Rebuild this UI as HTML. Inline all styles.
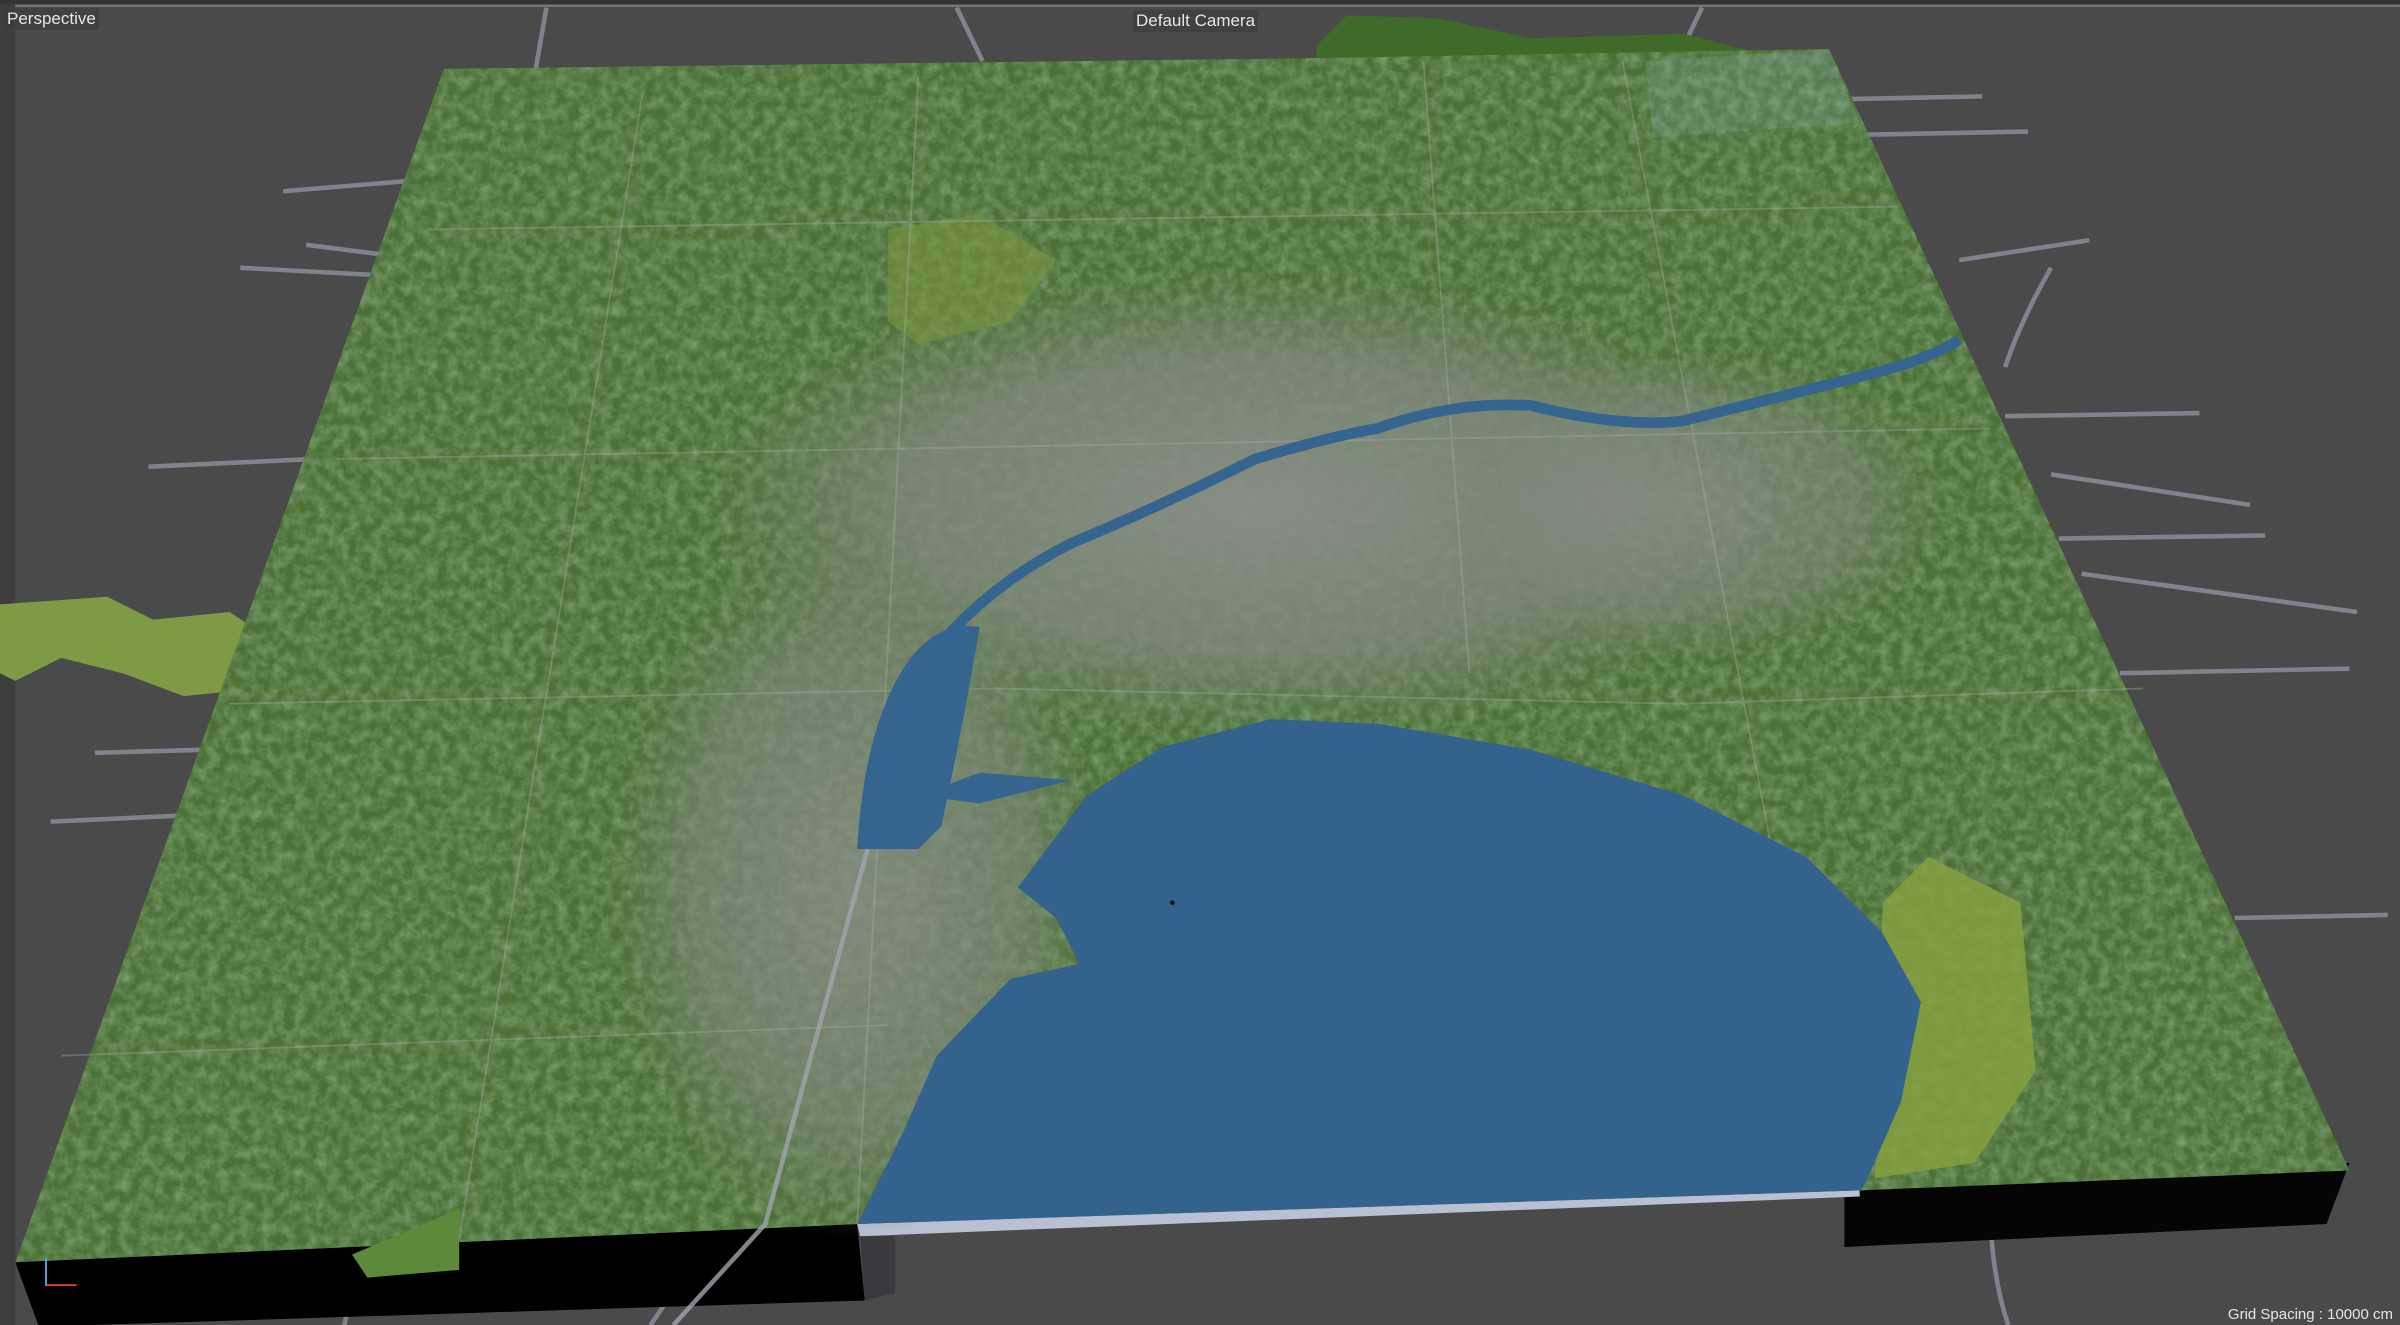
<!DOCTYPE html>
<html><head><meta charset="utf-8"><style>
html,body{margin:0;padding:0;background:#4a4a4a;width:2400px;height:1325px;overflow:hidden}
svg{position:absolute;left:0;top:0}
.lbl{position:absolute;font-family:"Liberation Sans",sans-serif;color:#e6e6e6;font-size:17px;background:rgba(60,60,60,.6);padding:1px 3px;white-space:nowrap}
</style></head><body>
<svg width="2400" height="1325" viewBox="0 0 1568 866" preserveAspectRatio="none">
<defs>
<filter id="n" x="0" y="0" width="100%" height="100%">
<feTurbulence type="fractalNoise" baseFrequency="0.14" numOctaves="3" seed="3"/>
<feColorMatrix values="0 0 0 0 0.22  0 0 0 0 0.38  0 0 0 0 0.18  0 0 0 1.4 -0.45"/>
<feComposite in2="SourceGraphic" operator="in"/>
</filter>
<radialGradient id="urb" cx="0.5" cy="0.5" r="0.5">
<stop offset="0" stop-color="#8a8f88" stop-opacity="0.95"/>
<stop offset="0.65" stop-color="#7f877b" stop-opacity="0.8"/>
<stop offset="1" stop-color="#76826e" stop-opacity="0"/>
</radialGradient>
</defs>
<rect width="1568" height="866" fill="#4a4a4a"/>
<rect x="0" y="0" width="1568" height="3" fill="#333"/>
<rect x="0" y="3" width="1568" height="1.5" fill="#777"/>
<rect x="0" y="3" width="10" height="863" fill="#3e3e3e"/>
<g stroke="#8a8d98" stroke-width="3" fill="none" opacity="0.85">
<path d="M185 125 L270 118 L275 100"/><path d="M157 175 L250 180"/><path d="M200 160 L255 167"/>
<path d="M97 305 L205 300"/><path d="M62 492 L135 490"/><path d="M33 537 L120 533"/>
<path d="M1195 65 L1295 63"/><path d="M1220 88 L1325 86"/><path d="M1280 170 L1365 157"/>
<path d="M1310 272 L1437 270"/><path d="M1340 310 L1470 330"/><path d="M1345 352 L1480 350"/>
<path d="M1360 375 L1540 400"/><path d="M1385 440 L1535 437"/><path d="M1460 600 L1560 598"/>
<path d="M350 45 L357 5"/><path d="M625 5 L642 40"/><path d="M1100 30 L1112 5"/>
<path d="M1300 780 Q1300 830 1312 866"/><path d="M235 820 L225 866"/><path d="M470 800 L425 866"/>
<path d="M1340 175 Q1320 210 1310 240"/>
</g>
<path d="M0 395 L70 390 L100 405 L150 400 L180 420 L170 450 L120 455 L80 440 L40 430 L10 445 L0 440Z" fill="#7f9a45"/>
<path d="M860 30 L880 10 L940 12 L1000 25 L1100 22 L1150 35 L860 40Z" fill="#3f6a2a"/>
<path d="M10 825 L560 800 L565 850 L60 866 L25 866Z" fill="#000"/>
<path d="M1205 775 L1535 760 L1520 800 L1205 815Z" fill="#050505"/>
<path d="M560 800 L1215 775 L1215 782 L562 808Z" fill="#b8c0d2"/>
<path d="M562 808 L585 808 L585 845 L565 850Z" fill="#3a3a3e"/>
<path d="M290 45 L860 38 L1195 32 L1535 765 L1215 778 L560 800 L10 825Z" fill="#4c7138"/>
<path d="M290 45 L860 38 L1195 32 L1535 765 L1215 778 L560 800 L10 825Z" fill="#fff" filter="url(#n)"/>
<path d="M1075 40 L1195 32 L1215 80 L1080 90Z" fill="#8fb0c0" opacity="0.2"/>
<ellipse cx="820" cy="330" rx="360" ry="150" fill="url(#urb)"/>
<ellipse cx="560" cy="580" rx="160" ry="230" fill="url(#urb)" opacity="0.85"/>
<ellipse cx="1100" cy="330" rx="170" ry="100" fill="url(#urb)" opacity="0.75"/>
<path d="M580 150 L640 140 L690 170 L660 210 L600 225 L580 210Z" fill="#7a9440" opacity="0.6"/>
<path d="M1230 590 L1260 560 L1320 590 L1330 700 L1290 760 L1225 770Z" fill="#86a040" opacity="0.85"/>
<path d="M230 820 L300 790 L300 830 L240 835Z" fill="#5c8a3a"/>
<g stroke="#a9aeac" stroke-width="1.2" fill="none" opacity="0.35">
<path d="M150 460 L650 450 L1100 460 L1400 450"/><path d="M220 300 L1300 280"/><path d="M280 150 L1240 135"/>
<path d="M40 690 L580 670"/><path d="M600 50 L560 800"/><path d="M930 40 L960 440"/><path d="M420 60 L300 810"/>
<path d="M1060 40 L1200 780"/>
</g>
<path d="M590 470 L500 800 L440 866" stroke="#a0a4ac" stroke-width="3" fill="none" opacity="0.8"/>
<path d="M615 420 Q650 380 700 355 Q760 330 820 300 Q870 285 900 280 Q950 262 1000 265 Q1060 280 1100 275 Q1180 255 1220 245 Q1260 235 1280 222" stroke="#35648f" stroke-width="7" fill="none"/>
<path d="M560 555 Q565 470 595 430 Q615 405 640 410 Q630 470 615 540 L600 555Z" fill="#35648f"/>
<path d="M600 520 L640 505 L700 510 L640 525Z" fill="#35648f"/>
<path d="M560 800 L590 740 L612 690 L660 640 L705 630 L690 600 L665 580 L710 520 L760 488 L830 470 L900 473 L1000 490 L1100 520 L1180 560 L1230 610 L1255 655 L1242 720 L1218 775 L1215 778Z" fill="#33628c"/>
<circle cx="766" cy="590" r="1.5" fill="#111"/>
<path d="M30 822 L30 840 L50 840" stroke="#e04040" stroke-width="1.2" fill="none"/>
<path d="M30 822 L30 840" stroke="#4ad" stroke-width="1.2"/>
</svg>
<div class="lbl" style="left:4px;top:8px">Perspective</div>
<div class="lbl" style="left:1133px;top:10px">Default Camera</div>
<div class="lbl" style="right:4px;top:1305px;background:none;font-size:15px">Grid Spacing : 10000 cm</div>
</body></html>
